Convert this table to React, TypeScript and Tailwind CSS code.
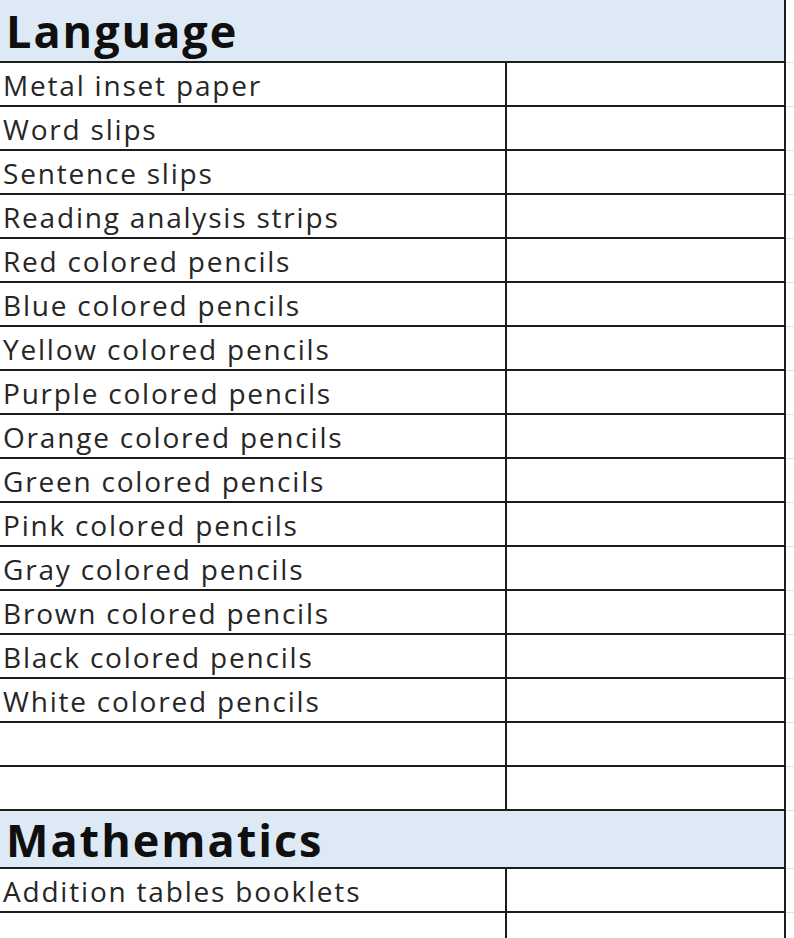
import React from "react";

const language = [
  "Metal inset paper",
  "Word slips",
  "Sentence slips",
  "Reading analysis strips",
  "Red colored pencils",
  "Blue colored pencils",
  "Yellow colored pencils",
  "Purple colored pencils",
  "Orange colored pencils",
  "Green colored pencils",
  "Pink colored pencils",
  "Gray colored pencils",
  "Brown colored pencils",
  "Black colored pencils",
  "White colored pencils",
  "",
  "",
];

const math = ["Addition tables booklets", ""];

function Row({ label }: { label: string }) {
  return (
    <div className="flex h-[44px] border-b-2 border-[#1c1c1c]">
      <div className="flex w-[507px] items-center border-r-2 border-[#1c1c1c] pl-[3px] pt-[2px] text-[28px] font-normal leading-none tracking-[1.8px] text-[#262626]">
        {label}
      </div>
      <div className="flex-1" />
    </div>
  );
}

function Header({ title, h }: { title: string; h: string }) {
  return (
    <div className={`flex items-center border-b-2 border-[#1c1c1c] bg-[#dde9f5] pl-[6px] ${h}`}>
      <span className="text-[45px] font-bold leading-none tracking-[2px] text-[#0f0f0f]">{title}</span>
    </div>
  );
}

export default function App() {
  return (
    <div
      className="flex h-[938px] w-[794px] overflow-hidden bg-white"
      style={{ fontFamily: "'Open Sans', Lato, sans-serif", fontVariantLigatures: "none" }}
    >
      <div className="w-[786px] shrink-0 border-r-2 border-[#1c1c1c]">
        <Header title="Language" h="h-[63px]" />
        {language.map((l, i) => (
          <Row key={i} label={l} />
        ))}
        <Header title="Mathematics" h="h-[58px]" />
        {math.map((l, i) => (
          <Row key={i} label={l} />
        ))}
      </div>
      <div className="flex-1">
        <div className="h-[63px] border-b border-[#ddd]" />
        {language.map((_, i) => (
          <div key={i} className="h-[44px] border-b border-[#ddd]" />
        ))}
        <div className="h-[58px] border-b border-[#ddd]" />
        {math.map((_, i) => (
          <div key={i} className="h-[44px] border-b border-[#ddd]" />
        ))}
      </div>
    </div>
  );
}
